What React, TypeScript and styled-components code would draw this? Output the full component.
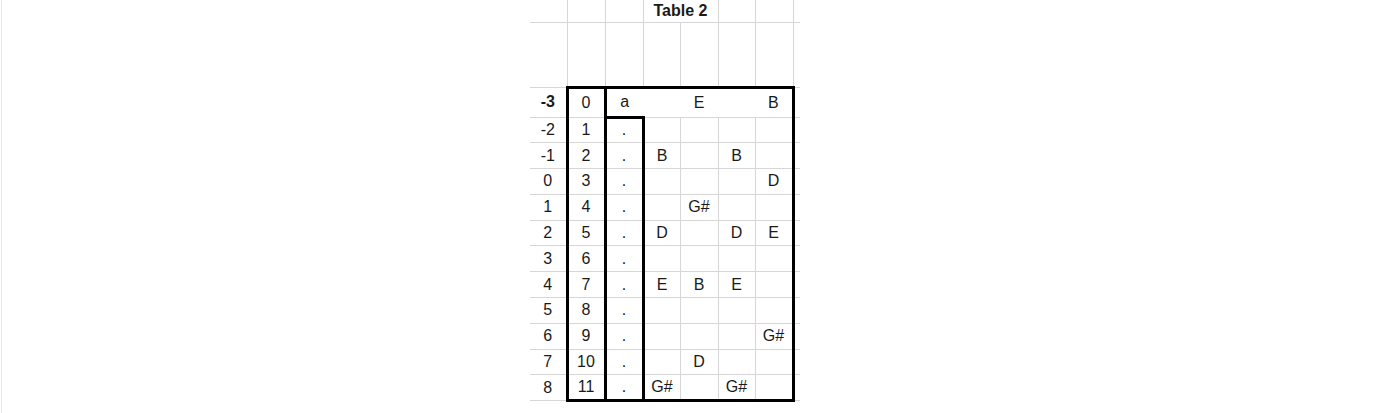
import React from "react";
import styled, { createGlobalStyle, css } from "styled-components";

const Global = createGlobalStyle`
  html, body { margin: 0; padding: 0; background: #fff; }
  body { font-family: "Liberation Sans", Arial, sans-serif; }
`;

const Page = styled.div`
  height: 413px;
  margin-left: 1px;
  border-left: 1px solid #e6e6e6;
  padding-left: 528px;
  box-sizing: border-box;
  overflow: hidden;
`;

const Sheet = styled.table`
  border-collapse: collapse;
  table-layout: fixed;
  width: 270px;
  font-family: "Liberation Sans", Arial, sans-serif;
  font-size: 16px;
  color: #1a1a1a;
`;

const GRID = "1px solid #d6d6d6";
const BOLD = "3px solid #000";

type CellProps = {
  $bold?: boolean;
  $noRight?: boolean;
  $bl?: boolean;
  $br?: boolean;
  $bt?: boolean;
  $bb?: boolean;
  $last?: boolean;
};

const Cell = styled.td<CellProps>`
  padding: 0;
  text-align: center;
  vertical-align: middle;
  white-space: nowrap;
  overflow: visible;
  border-right: ${(p) => (p.$noRight || p.$last ? "none" : GRID)};
  border-bottom: ${GRID};
  font-weight: ${(p) => (p.$bold ? 700 : 400)};
  ${(p) => p.$bl && css`border-left: ${BOLD};`}
  ${(p) => p.$br && css`border-right: ${BOLD};`}
  ${(p) => p.$bt && css`border-top: ${BOLD};`}
  ${(p) => p.$bb && css`border-bottom: ${BOLD};`}
`;

const Title = styled(Cell)`
  font-size: 16px;
`;

const Row = styled.tr<{ $h: number }>`
  height: ${(p) => p.$h}px;
`;

const widths = [37, 38, 38, 37, 38, 37, 38, 7];

const notes: string[][] = [
  ["", "", "", ""],
  ["B", "", "B", ""],
  ["", "", "", "D"],
  ["", "G#", "", ""],
  ["D", "", "D", "E"],
  ["", "", "", ""],
  ["E", "B", "E", ""],
  ["", "", "", ""],
  ["", "", "", "G#"],
  ["", "D", "", ""],
  ["G#", "", "G#", ""],
];

export default function App() {
  return (
    <>
      <Global />
      <Page>
        <Sheet>
          <colgroup>
            {widths.map((w, i) => (
              <col key={i} style={{ width: w }} />
            ))}
          </colgroup>
          <tbody>
            <Row $h={22}>
              <Cell />
              <Cell />
              <Cell />
              <Title colSpan={2} $bold>
                Table 2
              </Title>
              <Cell />
              <Cell />
              <Cell $last />
            </Row>
            <Row $h={65}>
              <Cell />
              <Cell />
              <Cell />
              <Cell />
              <Cell />
              <Cell />
              <Cell />
              <Cell $last />
            </Row>
            <Row $h={30}>
              <Cell $bold>-3</Cell>
              <Cell $bl $br $bt>0</Cell>
              <Cell $bt $noRight>a</Cell>
              <Cell $bt $noRight />
              <Cell $bt $noRight>E</Cell>
              <Cell $bt $noRight />
              <Cell $bt $br>B</Cell>
              <Cell $last />
            </Row>
            {notes.map((r, i) => {
              const last = i === notes.length - 1;
              return (
                <Row key={i} $h={25.8}>
                  <Cell>{i - 2}</Cell>
                  <Cell $bl $br $bb={last}>
                    {i + 1}
                  </Cell>
                  <Cell $br $bt={i === 0} $bb={last}>
                    .
                  </Cell>
                  {r.map((n, j) => (
                    <Cell key={j} $bb={last} $br={j === 3}>
                      {n}
                    </Cell>
                  ))}
                  <Cell $last />
                </Row>
              );
            })}
          </tbody>
        </Sheet>
      </Page>
    </>
  );
}
